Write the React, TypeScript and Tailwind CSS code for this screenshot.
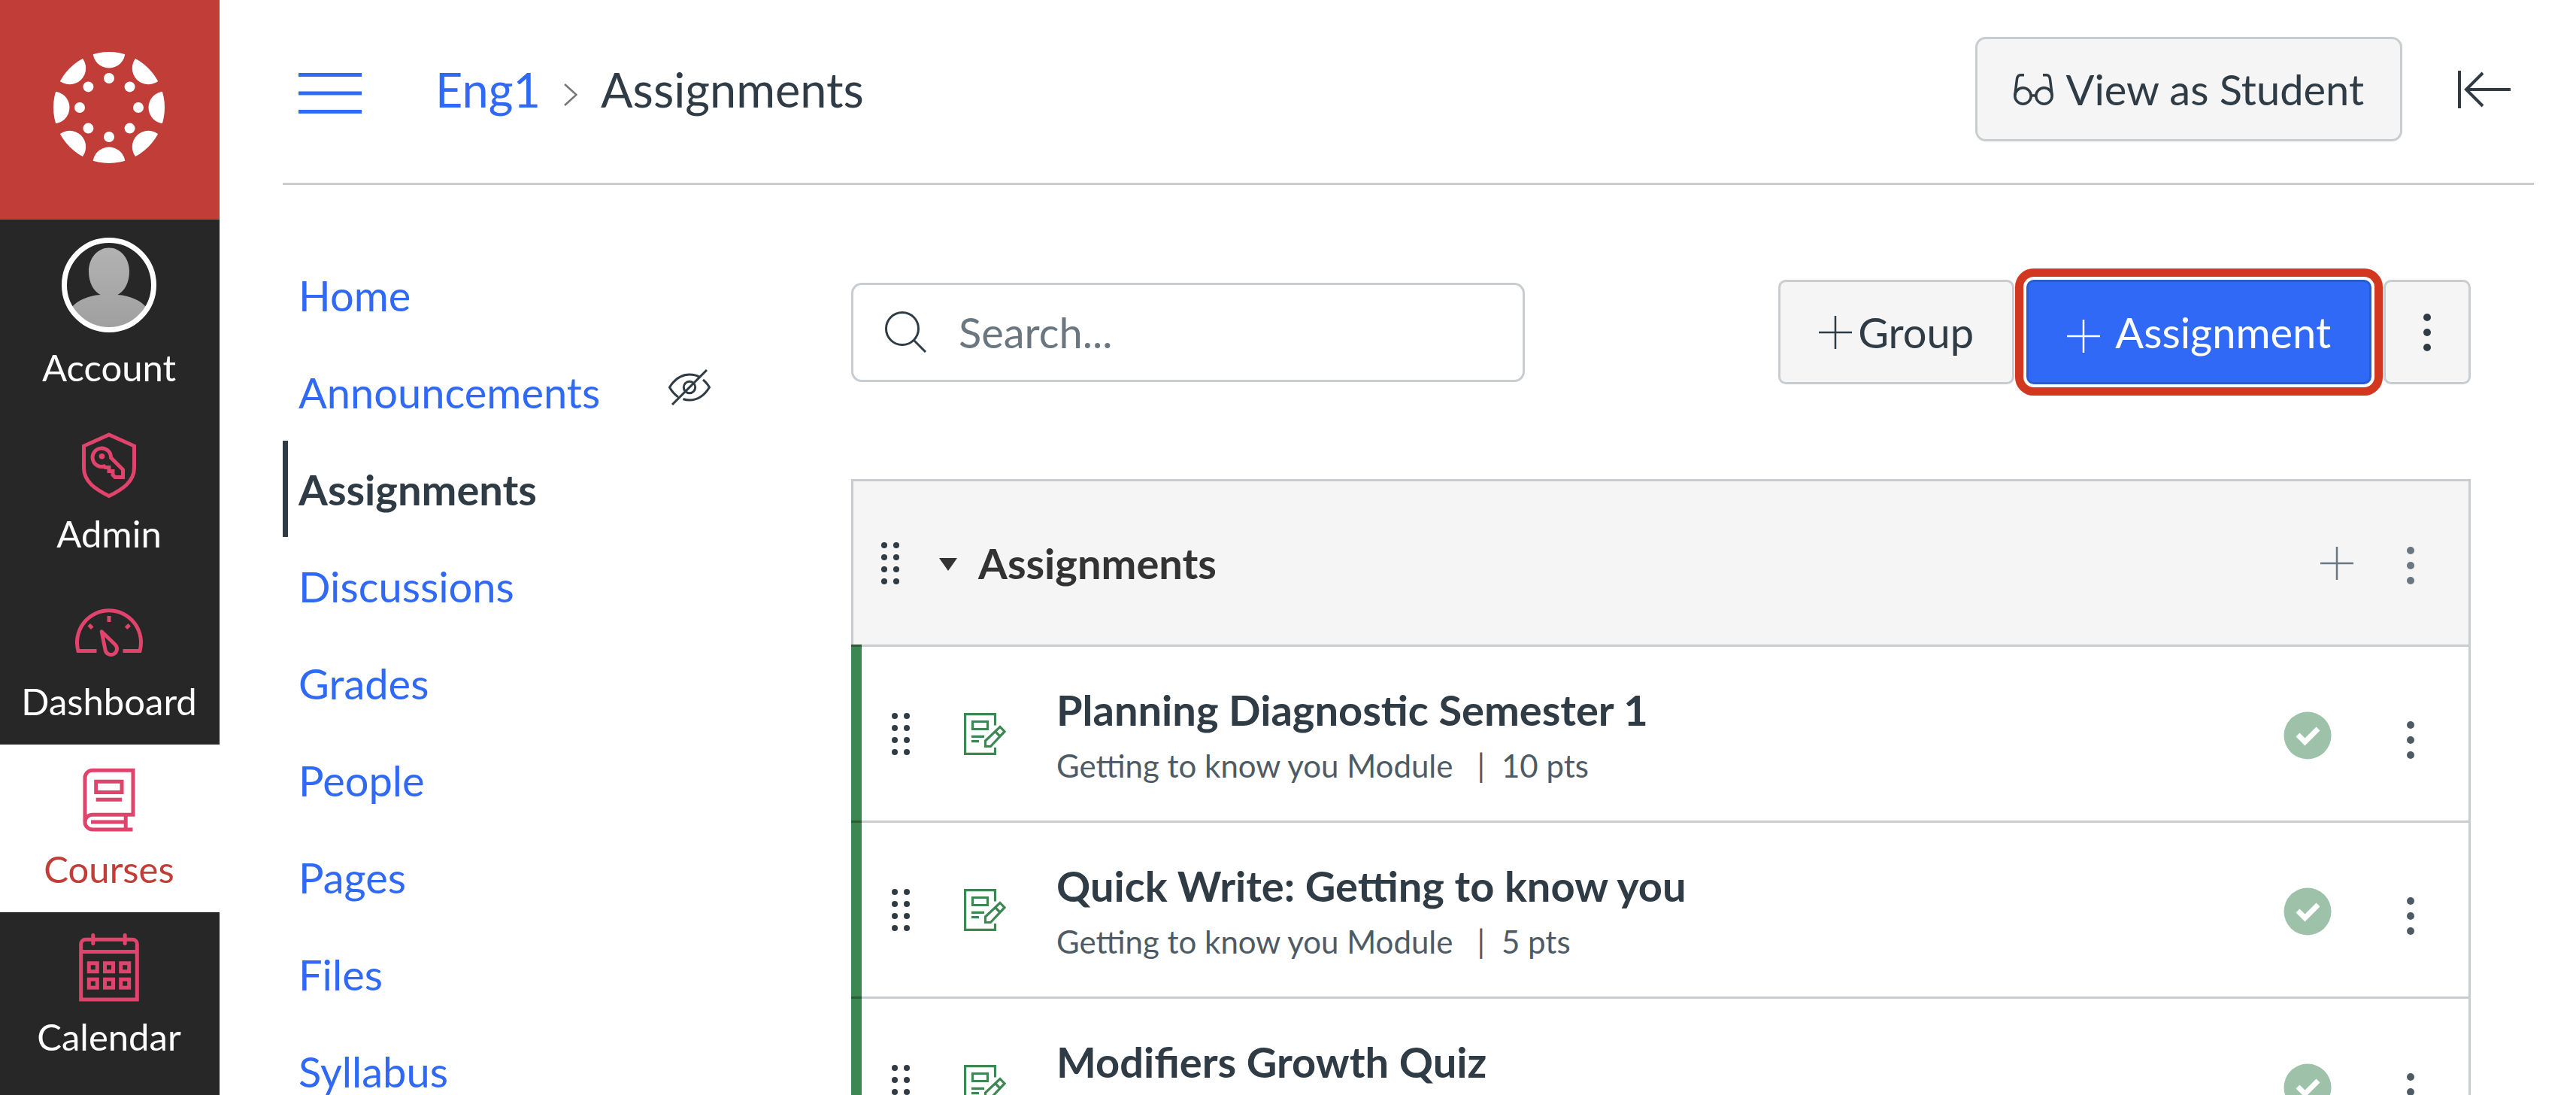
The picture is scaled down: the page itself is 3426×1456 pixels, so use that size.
import React from "react";

const pages = [
  { name: "Home" },
  { name: "Announcements", hidden: true },
  { name: "Assignments", active: true },
  { name: "Discussions" },
  { name: "Grades" },
  { name: "People" },
  { name: "Pages" },
  { name: "Files" },
  { name: "Syllabus" },
];

const assignments = [
  {
    title: "Planning Diagnostic Semester 1",
    module: "Getting to know you Module",
    points: "10 pts",
  },
  {
    title: "Quick Write: Getting to know you",
    module: "Getting to know you Module",
    points: "5 pts",
  },
  { title: "Modifiers Growth Quiz" },
];

const angles = [0, 45, 90, 135, 180, 225, 270, 315];

function Logo() {
  return (
    <svg viewBox="0 0 148 148" className="size-[148px] fill-white">
      <clipPath id="logo-clip">
        <circle cx="74" cy="74" r="74" />
      </clipPath>
      <g clipPath="url(#logo-clip)">
        {angles.map((a) => (
          <g key={a} transform={`rotate(${a} 74 74)`}>
            <circle cx="74" cy="0" r="21.5" />
            <circle cx="74" cy="35" r="7" />
          </g>
        ))}
      </g>
    </svg>
  );
}

function Avatar() {
  return (
    <svg viewBox="0 0 126 126" className="size-[126px]">
      <defs>
        <clipPath id="avatar-clip">
          <circle cx="63" cy="63" r="57" />
        </clipPath>
        <linearGradient id="avatar-fill" x1="0" y1="0" x2="0" y2="1">
          <stop offset="0" stopColor="#b2b2b2" />
          <stop offset="1" stopColor="#9f9f9f" />
        </linearGradient>
      </defs>
      <path
        clipPath="url(#avatar-clip)"
        fill="url(#avatar-fill)"
        d="M63 13.5C78 13.5 90 27 90 45C90 59 84 71 74.500 76C90 77 105 83 113 93V126H13V93C21 83 36 77 51.500 76C42 71 36 59 36 45C36 27 48 13.500 63 13.500Z"
      />
      <circle cx="63" cy="63" r="59.5" fill="none" stroke="white" strokeWidth="7" />
    </svg>
  );
}

function NavIcon({ children }: { children: React.ReactNode }) {
  return (
    <svg
      viewBox="0 0 91 91"
      className="size-[91px]"
      fill="none"
      stroke="#e0436b"
      strokeWidth="5"
    >
      {children}
    </svg>
  );
}

function Plus({ className = "" }: { className?: string }) {
  return (
    <svg viewBox="0 0 44 44" className={`size-11 ${className}`} stroke="currentColor" strokeWidth="2.5">
      <path d="M22 0V44M0 22H44" />
    </svg>
  );
}

function Kebab() {
  return (
    <svg viewBox="0 0 10 50" className="h-[50px] w-2.5" fill="currentColor">
      <circle cx="5" cy="5" r="5" />
      <circle cx="5" cy="25" r="5" />
      <circle cx="5" cy="45" r="5" />
    </svg>
  );
}

function Drag() {
  return (
    <svg viewBox="0 0 24 56" className="h-14 w-6 fill-[#2f3c46]">
      {[4, 20, 36, 52].map((y) => (
        <g key={y}>
          <circle cx="4" cy={y} r="4" />
          <circle cx="20" cy={y} r="4" />
        </g>
      ))}
    </svg>
  );
}

function AssignmentIcon() {
  return (
    <svg viewBox="0 0 56 56" className="size-14" fill="none" stroke="#3d8752" strokeWidth="3.2">
      <path d="M41.500 16.500V1.600H1.600V54.400H41.500V46" />
      <path d="M11.500 11.500H31.500V21.500H11.500ZM10 31.300H27M10 37.700H20" />
      <path d="M28.500 44.500V37L48 18.500L54 24.700L35.500 44.500ZM41.500 24.500L48.500 31.500" />
    </svg>
  );
}

export default function App() {
  return (
    <div className="flex h-screen overflow-hidden bg-white font-['Lato',sans-serif] text-[56px] leading-[67px] text-[#2f3c46]">
      {/* global navigation */}
      <nav className="w-[292px] shrink-0 bg-[#272727] text-[49px] leading-[60px] text-white">
        <a href="#" aria-label="Canvas" className="flex h-[292px] items-center justify-center bg-[#c13d38] pr-0.5 pb-1.5">
          <Logo />
        </a>
        <a href="#" className="flex flex-col items-center gap-4 pt-6 pr-0.5 pb-[26px]">
          <Avatar />
          Account
        </a>
        <a href="#" className="flex flex-col items-center gap-4 py-7 pr-0.5">
          <NavIcon>
            <path d="M45 6L78.500 21V50C78.500 69 62 79 45 87.500C28 79 11.500 69 11.500 50V21Z" />
            <path d="M40 47.500A12.200 12.200 0 1 1 47.500 36.500L63.500 52.500V62.500H53L50 59.500V54.500H45V49.500H40L37 47" />
            <circle cx="35.500" cy="34.700" r="3.800" fill="#e0436b" stroke="none" />
          </NavIcon>
          Admin
        </a>
        <a href="#" className="flex flex-col items-center gap-4 py-7 pr-0.5">
          <NavIcon>
            <path d="M28.500 70.500H4A42.500 42.500 0 1 1 86 70.500H63.500" />
            <path d="M45 24V32M18.200 35.700L22.800 40.300M72.200 35.700L67.600 40.300" />
            <path d="M35.200 44.800L40 69A7.800 7.800 0 1 0 53 62Z" strokeLinejoin="round" />
          </NavIcon>
          Dashboard
        </a>
        <a href="#" className="flex flex-col items-center gap-4 bg-white py-7 pr-0.5 text-[#c13d38]">
          <NavIcon>
            <path d="M13 75V16A10 10 0 0 1 23 6.200H77V65.200H23A10 10 0 0 0 13 75A10 10 0 0 0 23 85H76.500" />
            <path d="M21 75H67M67.200 65V85M27.700 45.300H62.200" />
            <path d="M27.700 21.200H62V35.500H27.700Z" />
          </NavIcon>
          Courses
        </a>
        <a href="#" className="flex flex-col items-center gap-4 py-7 pr-0.5">
          <NavIcon>
            <path d="M7.700 88V14.200A6 6 0 0 1 13.700 8.200H76.300A6 6 0 0 1 82.300 14.200V88ZM7.700 24.500H82.300" />
            <path d="M23.800 2.500V13.500M66.200 2.500V13.500" strokeLinecap="round" />
            <path d="M18.300 39.800h11v11h-11zM39.500 39.800h11v11h-11zM60.700 39.800h11v11h-11zM18.300 61.200h11v11h-11zM39.500 61.200h11v11h-11zM60.700 61.200h11v11h-11z" />
          </NavIcon>
          Calendar
        </a>
      </nav>

      <div className="min-w-0 flex-1 pl-[84px]">
        {/* breadcrumbs */}
        <header className="mr-14 flex items-center border-b-3 border-[#c7cdd1] pt-[49px] pr-[31px] pb-[55px]">
          <button aria-label="Course menu" className="mt-2.5 ml-[21px]">
            <svg viewBox="0 0 84 54" className="h-[54px] w-[84px]" stroke="#3069f6" strokeWidth="5">
              <path d="M0 2.500H84M0 27H84M0 51.500H84" />
            </svg>
          </button>
          <div className="ml-[98px] flex items-center text-[63px] leading-[76px]">
            <a href="#" className="text-[#3069f6]">
              Eng1
            </a>
            <svg viewBox="0 0 18 30" className="mx-[31px] mt-3.5 h-[30px] w-[18px]" fill="none" stroke="#777777" strokeWidth="2.500">
              <path d="M1 1L16.500 15L1 29" />
            </svg>
            <span>Assignments</span>
          </div>
          <button className="ml-auto flex h-[139px] items-center gap-4 rounded-[14px] border-3 border-[#c7cdd1] bg-[#f5f5f5] px-12">
            <svg viewBox="0 0 53 42" className="h-[42px] w-[53px]" fill="none" stroke="#2f3c46" strokeWidth="3.5">
              <circle cx="12.500" cy="29.500" r="10.700" />
              <circle cx="40.500" cy="29.500" r="10.700" />
              <path d="M23 29H30M1.800 29L4.500 7Q5.500 1.800 9 1.800H14M51.200 29L48.500 7Q47.500 1.800 44 1.800H39" />
            </svg>
            View as Student
          </button>
          <button aria-label="Collapse" className="ml-[74px]">
            <svg viewBox="0 0 70 50" className="h-[50px] w-[70px]" fill="none" stroke="#2f3c46" strokeWidth="4">
              <path d="M2 0V50M70 25H11M33 3L11 25L33 47" />
            </svg>
          </button>
        </header>

        <div className="flex pt-[82px]">
          {/* course navigation */}
          <nav className="flex w-[569px] shrink-0 flex-col gap-px">
            {pages.map((page) => (
              <div
                key={page.name}
                className={`flex h-32 items-center justify-between border-l-[7px] pl-3.5 ${
                  page.active ? "border-[#2f3c46]" : "border-transparent"
                }`}
              >
                <a href="#" className={page.active ? "font-bold" : "text-[#3069f6]"}>
                  {page.name}
                </a>
                {page.hidden && (
                  <svg viewBox="0 0 56 48" className="mb-3 h-12 w-14" fill="none" stroke="#2f3c46" strokeWidth="3">
                    <path d="M13 37Q6 32 1.500 24Q12 7 28 7Q36 7 41.500 10.500M46 14Q51 18 54.500 24Q44 41 28 41Q23 41 19.500 39.500" />
                    <circle cx="28" cy="24" r="7.700" />
                    <path d="M51 1L5 47" />
                  </svg>
                )}
              </div>
            ))}
          </nav>

          <main className="mr-[140px] ml-[187px] min-w-0 flex-1 pt-11">
            {/* toolbar */}
            <div className="flex items-center gap-4">
              <label className="mr-auto flex h-[132px] w-[896px] items-center gap-[43px] rounded-[14px] border-3 border-[#c7cdd1] px-[42px]">
                <svg viewBox="0 0 55 55" className="size-[55px]" fill="none" stroke="#2f3c46" strokeWidth="3">
                  <circle cx="23" cy="23" r="21.500" />
                  <path d="M38.500 38.500L54 54" />
                </svg>
                <input
                  type="text"
                  aria-label="Search"
                  placeholder="Search..."
                  className="min-w-0 flex-1 outline-none placeholder:text-[#6b7780]"
                />
              </label>
              <button className="flex h-[139px] items-center gap-2 rounded-[10px] border-3 border-[#c7cdd1] bg-[#f5f5f5] px-[51px]">
                <Plus />
                Group
              </button>
              <button className="flex h-[139px] items-center gap-5 rounded-[10px] border-3 border-[#2a5bd1] bg-[#3069f6] px-[51px] text-white shadow-[0_0_0_4px_white,0_0_0_15px_#d1381f]">
                <Plus className="mt-2.5" />
                Assignment
              </button>
              <button
                aria-label="More options"
                className="flex h-[139px] w-[116px] items-center justify-center rounded-[10px] border-3 border-[#c7cdd1] bg-[#f5f5f5]"
              >
                <Kebab />
              </button>
            </div>

            {/* assignment group */}
            <section className="mt-[126px] border-3 border-[#c7cdd1]">
              <div className="flex h-[217px] items-center bg-[#f5f5f5] pr-[72px] pl-[37px] text-[#6b7780]">
                <Drag />
                <svg viewBox="0 0 24 17" className="mt-1 mr-7 ml-[53px] h-[17px] w-6 fill-[#333333]">
                  <path d="M0 0H24L12 17Z" />
                </svg>
                <h2 className="font-bold text-[#333333]">Assignments</h2>
                <button aria-label="Add assignment" className="ml-auto">
                  <Plus />
                </button>
                <button aria-label="Group options" className="mt-1.5 ml-[71px]">
                  <Kebab />
                </button>
              </div>
              <ul>
                {assignments.map((item) => (
                  <li key={item.title} className="relative flex min-h-[234px] items-center border-t-3 border-[#c7cdd1] pr-[72px] pl-[51px]">
                    {/* published marker */}
                    <span className="absolute -top-[3px] bottom-0 -left-[3px] w-3.5 border-t-3 border-[#2c5c3a] bg-[#3d8752]" />
                    <Drag />
                    <div className="mr-[67px] ml-[72px]">
                      <AssignmentIcon />
                    </div>
                    <div className="self-start pt-[50px] pb-12">
                      <h3 className="font-bold">
                        <a href="#">{item.title}</a>
                      </h3>
                      {item.module && (
                        <p className="mt-4 flex gap-8 text-[42px] leading-[50px] text-[#4f5b64]">
                          {item.module}
                          <span>
                            |<span className="ml-[22px]">{item.points}</span>
                          </span>
                        </p>
                      )}
                    </div>
                    <button aria-label="Published" className="mt-1 ml-auto">
                      <svg viewBox="0 0 64 64" className="size-16">
                        <circle cx="32" cy="32" r="31.500" fill="#9ec2a9" />
                        <path d="M19 31L28.500 40.500L46 23" fill="none" stroke="white" strokeWidth="7" />
                      </svg>
                    </button>
                    <button aria-label="Assignment options" className="mt-4 ml-[100px] text-[#4f5b64]">
                      <Kebab />
                    </button>
                  </li>
                ))}
              </ul>
            </section>
          </main>
        </div>
      </div>
    </div>
  );
}
